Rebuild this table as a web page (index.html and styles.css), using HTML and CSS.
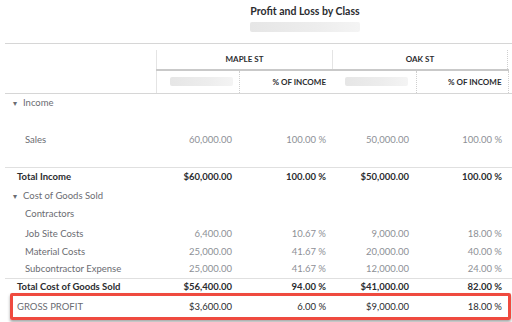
FILE: index.html
```html
<!DOCTYPE html>
<html>
<head>
<meta charset="utf-8">
<link rel="stylesheet" href="styles.css">
</head>
<body>
<div class="report">
  <div class="head">
    <div class="title">Profit and Loss by Class</div>
    <div class="blur sub"></div>
  </div>
  <table class="pl">
    <colgroup>
      <col class="c-label"><col class="c-amt"><col class="c-pct"><col class="c-amt2"><col class="c-pct2"><col class="c-end">
    </colgroup>
    <thead>
      <tr class="h1">
        <th></th>
        <th colspan="2"><div class="hcell first">MAPLE ST</div></th>
        <th colspan="2"><div class="hcell second">OAK ST</div></th>
        <th></th>
      </tr>
      <tr class="h2">
        <th></th>
        <th class="amt-h bl"><div class="blur bar"></div></th>
        <th class="pct-h">% OF INCOME</th>
        <th class="amt-h"><div class="blur bar"></div></th>
        <th class="pct-h dr">% OF INCOME</th>
        <th></th>
      </tr>
    </thead>
    <tbody>
      <tr class="sec r-income"><td class="lbl"><span class="caret">&#9662;</span>Income</td><td></td><td></td><td></td><td></td><td></td></tr>
      <tr class="row r-sales"><td class="lbl ind">Sales</td><td class="num">60,000.00</td><td class="num">100.00 %</td><td class="num">50,000.00</td><td class="num">100.00 %</td><td></td></tr>
      <tr class="tot r-ti"><td class="lbl">Total Income</td><td class="num">$60,000.00</td><td class="num">100.00 %</td><td class="num">$50,000.00</td><td class="num">100.00 %</td><td></td></tr>
      <tr class="sec"><td class="lbl"><span class="caret">&#9662;</span>Cost of Goods Sold</td><td></td><td></td><td></td><td></td><td></td></tr>
      <tr class="row"><td class="lbl ind">Contractors</td><td></td><td></td><td></td><td></td><td></td></tr>
      <tr class="row r-js"><td class="lbl ind">Job Site Costs</td><td class="num">6,400.00</td><td class="num">10.67 %</td><td class="num">9,000.00</td><td class="num">18.00 %</td><td></td></tr>
      <tr class="row"><td class="lbl ind">Material Costs</td><td class="num">25,000.00</td><td class="num">41.67 %</td><td class="num">20,000.00</td><td class="num">40.00 %</td><td></td></tr>
      <tr class="row"><td class="lbl ind">Subcontractor Expense</td><td class="num">25,000.00</td><td class="num">41.67 %</td><td class="num">12,000.00</td><td class="num">24.00 %</td><td></td></tr>
      <tr class="tot r-tc"><td class="lbl">Total Cost of Goods Sold</td><td class="num">$56,400.00</td><td class="num">94.00 %</td><td class="num">$41,000.00</td><td class="num">82.00 %</td><td></td></tr>
      <tr class="gp"><td class="lbl">GROSS PROFIT</td><td class="num">$3,600.00</td><td class="num">6.00 %</td><td class="num">$9,000.00</td><td class="num">18.00 %</td><td></td></tr>
    </tbody>
  </table>
  <div class="highlight"></div>
</div>
</body>
</html>
```

FILE: styles.css
```css
* { box-sizing: border-box; }
html, body { margin: 0; padding: 0; background: #fff; }
body {
  width: 512px;
  height: 322px;
  overflow: hidden;
  font-family: Lato, "Open Sans", sans-serif;
  color: #393a3d;
}
.report { position: relative; }
.head {
  height: 43px;
  display: flex;
  flex-direction: column;
  align-items: center;
  padding-top: 4px;
  padding-left: 98px;
}
.title {
  font-weight: 700;
  font-size: 10.5px;
  line-height: 14px;
  color: #2b2c2f;
}
.blur {
  background: linear-gradient(90deg, #e6e6e6, #ededed 60%, #f4f4f4);
  border-radius: 2px;
}
.sub { width: 110px; height: 10px; margin-top: 4px; }

.pl {
  margin-left: 5px;
  width: 507px;
  border-collapse: collapse;
  table-layout: fixed;
  border-top: 1px solid #d6d6d6;
}
.c-label { width: 151px; }
.c-amt { width: 83px; }
.c-pct { width: 93px; }
.c-amt2 { width: 84px; }
.c-pct2 { width: 92px; }
.c-end { width: 4px; }

th, td { padding: 0; }
.h1 th { height: 26px; padding-top: 6px; vertical-align: top; }
.h1 th[colspan] { border-bottom: 2px solid #c9c9c9; }
.hcell {
  height: 19px;
  line-height: 18px;
  font-size: 8px;
  font-weight: 700;
  text-align: center;
  color: #2b2c2f;
}
.hcell.first { border-left: 1px solid #e4e4e4; }
.hcell.second { border-left: 1px solid #e4e4e4; border-right: 1px dotted #cfcfcf; }
.h2 th {
  height: 23px;
  font-size: 8px;
  font-weight: 700;
  color: #2b2c2f;
  border-bottom: 1px solid #d6d6d6;
  vertical-align: middle;
}
.amt-h { border-right: 1px dotted #cfcfcf; padding: 0 7px 0 13px; }
.amt-h.bl { border-left: 1px solid #e4e4e4; }
.bar { height: 9px; width: 63px; }
.pct-h { text-align: right; padding-right: 6px !important; }
.pct-h.dr { border-right: 1px dotted #cfcfcf; }

td { font-size: 9.5px; white-space: nowrap; }
.lbl { color: #6b6c72; padding-left: 12px; }
.lbl.ind { padding-left: 20px; }
.caret { font-size: 8px; color: #6b6c72; margin-right: 4px; margin-left: -8px; display: inline-block; width: 6px; }
.sec .lbl { padding-left: 16px; }
.num { text-align: right; color: #8d9096; padding-right: 6px; }
.num:nth-child(2), .num:nth-child(4) { padding-right: 7px; }

.sec td, .row td { height: 18px; }
.r-income td { height: 18px; }
.r-sales td { height: 56px; padding-top: 20px; vertical-align: top; line-height: 18px; }
.r-sales td:last-child, .r-income td { padding-top: 0; }
.r-js td { height: 20px; padding-top: 2px; }
.tot td {
  height: 19px;
  color: #2b2c2f;
  font-weight: 700;
  border-top: 1px solid #e0e0e0;
}
.tot .lbl { padding-left: 12px; }
.r-tc td { height: 17px; }
.gp td { height: 22px; color: #2b2c2f; }
.gp .lbl { color: #6b6c72; padding-left: 12px; }

.highlight {
  position: absolute;
  left: 10px;
  top: 293px;
  width: 501px;
  height: 27px;
  border: 3px solid #ef4a3f;
  border-radius: 2px;
  box-shadow: 0 2px 3px rgba(0,0,0,0.35);
}
```
